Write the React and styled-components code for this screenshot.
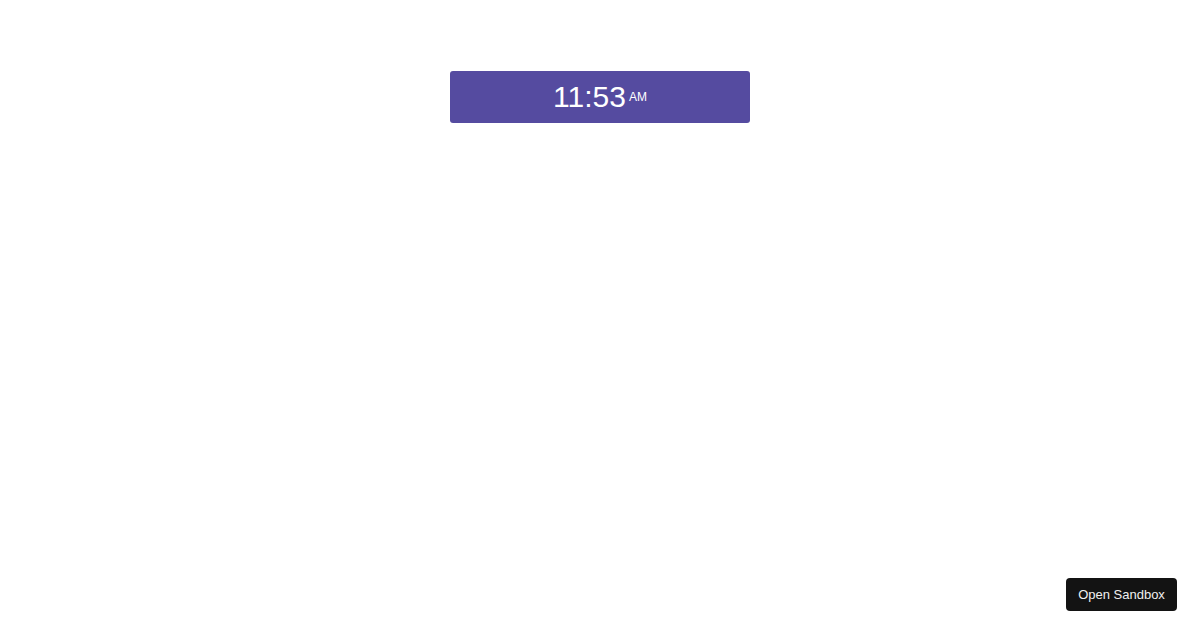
import React from "react";
import styled, { createGlobalStyle } from "styled-components";

const Global = createGlobalStyle`
  html, body { margin: 0; padding: 0; background: #ffffff; }
  body { font-family: "Liberation Sans", Arial, sans-serif; }
`;

const Page = styled.div`
  width: 1200px;
  height: 630px;
  display: flex;
  flex-direction: column;
  align-items: center;
  padding-top: 71px;
  box-sizing: border-box;
`;

const Clock = styled.div`
  width: 300px;
  height: 52px;
  background: #554ba0;
  border-radius: 3px;
  color: #ffffff;
  display: flex;
  align-items: center;
  justify-content: center;
  gap: 3px;
  font-family: "Liberation Sans", Arial, sans-serif;
`;

const Time = styled.span`
  font-size: 30px;
  line-height: normal;
`;

const Meridiem = styled.span`
  font-size: 12px;
  line-height: normal;
`;

const SandboxButton = styled.button`
  position: fixed;
  right: 23px;
  bottom: 19px;
  width: 111px;
  height: 33px;
  border: none;
  border-radius: 4px;
  background: #131313;
  color: #f0f0f0;
  font-family: "Liberation Sans", Arial, sans-serif;
  font-size: 13px;
  padding: 0;
  cursor: pointer;
`;

export default function App() {
  return (
    <>
      <Global />
      <Page>
        <Clock>
          <Time>11:53</Time>
          <Meridiem>AM</Meridiem>
        </Clock>
      </Page>
      <SandboxButton>Open Sandbox</SandboxButton>
    </>
  );
}
